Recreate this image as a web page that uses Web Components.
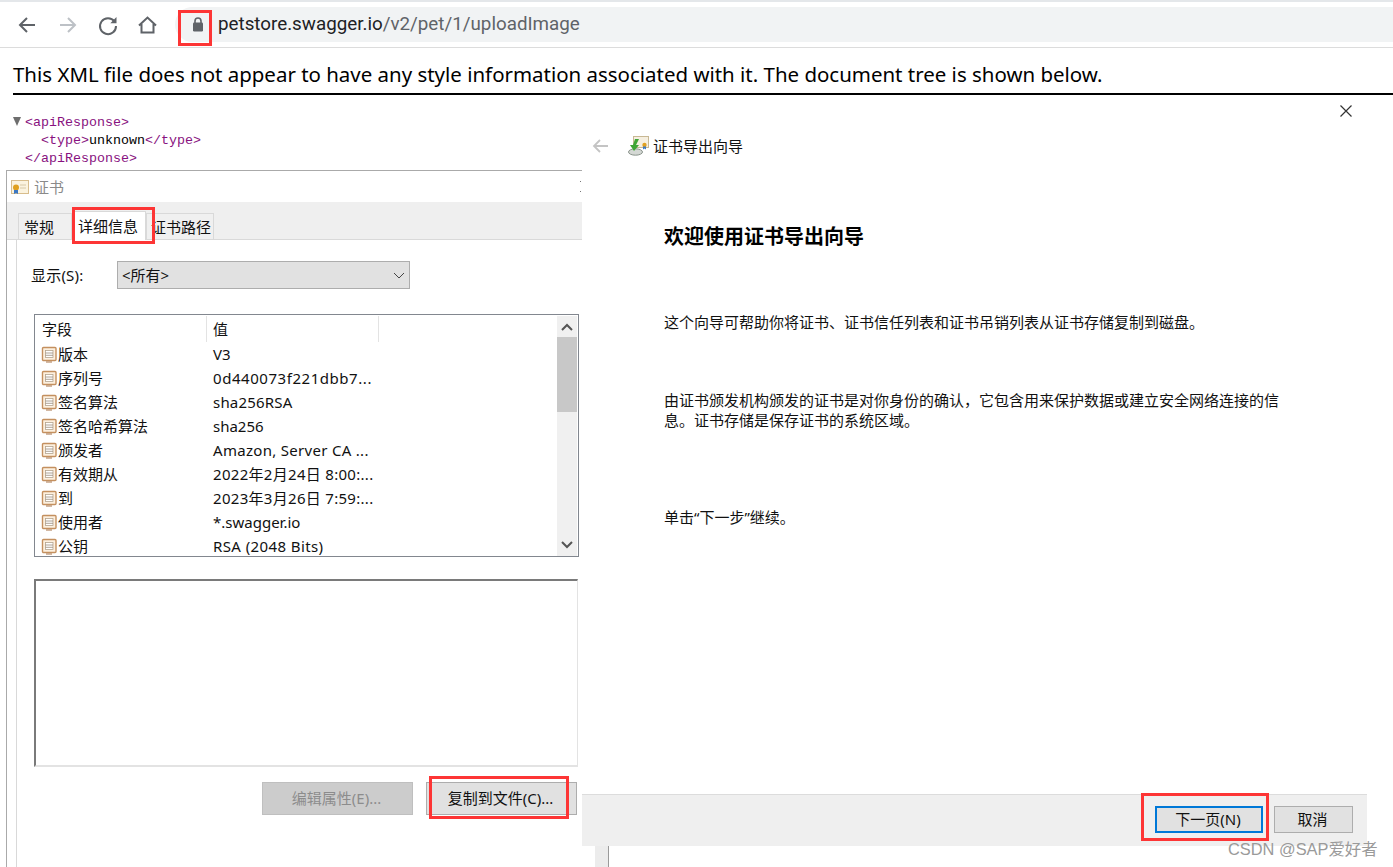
<!DOCTYPE html>
<html lang="zh">
<head>
<meta charset="utf-8">
<title>证书导出向导</title>
<style>
  html, body { margin: 0; height: 867px; overflow: hidden; background: #fff; }
  body { position: relative; font-family: "Noto Sans", "Noto Sans CJK SC", sans-serif; }
  cert-dialog { position: absolute; left: 6px; top: 170px; }
  export-wizard { position: absolute; left: 582px; top: 98px; }
  red-mark.lock { left: 178px; top: 10px; width: 28px; height: 30px; }
  red-mark.tab { left: 72px; top: 207px; width: 77px; height: 31px; }
  red-mark.copy { left: 429px; top: 776px; width: 134px; height: 37px; }
  red-mark.next { left: 1141px; top: 793px; width: 122px; height: 42px; }
  .watermark { position: absolute; left: 1228px; top: 838px; font: 16.4px/22px "Liberation Sans", "Noto Sans CJK SC", sans-serif; color: #9a9a9a; }
</style>
</head>
<body>
<browser-toolbar></browser-toolbar>
<xml-view></xml-view>
<cert-dialog></cert-dialog>
<export-wizard></export-wizard>
<red-mark class="lock"></red-mark>
<red-mark class="tab"></red-mark>
<red-mark class="copy"></red-mark>
<red-mark class="next"></red-mark>
<div class="watermark">CSDN @SAP爱好者</div>

<script>
const UI_FONT = `"Noto Sans", "Noto Sans CJK SC", sans-serif`;

class browserToolbar extends HTMLElement {
  constructor() {
    super();
    this.attachShadow({ mode: "open" });
  }

  connectedCallback() {
    this.shadowRoot.innerHTML = `
      <style>
        :host { display: block; height: 45px; border-top: 2px solid #e4e7ea; border-bottom: 1px solid #dcdcdc; }
        .bar { display: flex; align-items: center; height: 45px; padding-left: 15px; box-sizing: border-box; }
        .nav { display: flex; gap: 18px; width: 160px; flex: none; }
        svg { display: block; flex: none; overflow: visible; }
        .omni { flex: 1; height: 35px; display: flex; align-items: center; background: #f1f3f4; border-radius: 18px 0 0 18px; padding-left: 17px; }
        .url { margin-left: 14px; font: 18.8px/35px Roboto, sans-serif; color: #5f6368; white-space: nowrap; }
        .url b { font-weight: 400; color: #202124; }
      </style>
      <div class="bar">
        <div class="nav">
          <svg width="22" height="22" viewBox="0 0 22 22" fill="none" stroke="#5f6368" stroke-width="2"><path d="M20 11H5M12 4l-7 7 7 7"/></svg>
          <svg width="22" height="22" viewBox="0 0 22 22" fill="none" stroke="#bdc1c6" stroke-width="2"><path d="M5 11h15M13 4l7 7-7 7"/></svg>
          <svg width="22" height="22" viewBox="0 0 22 22" fill="none" stroke="#5f6368" stroke-width="2"><g transform="translate(2 0)"><path d="M17.500 7.500A8 8 0 1 0 19 12"/><path d="M19.500 3v6.200h-6.200z" fill="#5f6368" stroke="none"/></g></svg>
          <svg width="22" height="22" viewBox="0 0 22 22" fill="none" stroke="#5f6368" stroke-width="2"><path transform="translate(1.500 0)" d="M2.500 11.500 11 3.500l8.500 8M5 10v8.500h12V10"/></svg>
        </div>
        <div class="omni">
          <svg width="12" height="15" viewBox="0 0 12 15"><path d="M3 6V4a3 3 0 0 1 6 0v2" fill="none" stroke="#5f6368" stroke-width="1.600"/><rect x="1" y="5.500" width="10" height="9" rx="1.200" fill="#5f6368"/></svg>
          <span class="url"><b>petstore.swagger.io</b>/v2/pet/1/uploadImage</span>
        </div>
      </div>`;
  }
}

class xmlView extends HTMLElement {
  constructor() {
    super();
    this.attachShadow({ mode: "open" });
  }

  connectedCallback() {
    this.shadowRoot.innerHTML = `
      <style>
        :host { display: block; position: relative; }
        .notice { margin-left: 13px; height: 47px; box-sizing: border-box; padding-top: 13px; border-bottom: 2px solid #000; font: 20.47px/27px ${UI_FONT}; color: #000; white-space: nowrap; }
        .tree { padding: 19px 0 0 25px; font: 13.33px/18px "Liberation Mono", monospace; color: #881280; }
        .tree div { height: 18px; white-space: nowrap; }
        .tree .in { padding-left: 16px; }
        .tree i { font-style: normal; color: #000; }
        .arrow { position: absolute; left: 13px; top: 69px; width: 0; height: 0; border: 4px solid transparent; border-top: 9px solid #6e6e6e; border-bottom: 0; }
      </style>
      <div class="notice">This XML file does not appear to have any style information associated with it. The document tree is shown below.</div>
      <span class="arrow"></span>
      <div class="tree">
        <div>&lt;apiResponse&gt;</div>
        <div class="in"><span>&lt;type&gt;</span><i>unknown</i><span>&lt;/type&gt;</span></div>
        <div>&lt;/apiResponse&gt;</div>
      </div>`;
  }
}

class certRow extends HTMLElement {
  constructor() {
    super();
    this.attachShadow({ mode: "open" });
  }

  connectedCallback() {
    // track: the reference's hinted digits run a little wider on long values
    const track = this.getAttribute("track") || 0;
    this.shadowRoot.innerHTML = `
      <style>
        :host { display: grid; grid-template-columns: 172px 1fr; height: 24px; align-items: center; font: 15px/24px ${UI_FONT}; color: #111; white-space: nowrap; }
        .f { display: flex; align-items: center; padding-left: 6px; }
        .v { padding-left: 6px; letter-spacing: ${track}px; }
        svg { flex: none; margin-right: 1px; }
      </style>
      <div class="f">
        <svg width="16" height="17" viewBox="0 0 16 17">
          <rect x="1.500" y="1.500" width="13.500" height="13" rx="1" fill="#fdf0df" stroke="#c4905f" stroke-width="1.400"/>
          <rect x="4.500" y="4.500" width="7.500" height="7" fill="#fff" stroke="#b4a48e" stroke-width=".8"/>
          <path d="M4.500 7h7.500M4.500 9.300h7.500" stroke="#9a8c7a" stroke-width=".8"/>
          <path d="M5 16h6" stroke="#a8744a"/>
        </svg>
        <span>${this.getAttribute("field")}</span>
      </div>
      <div class="v">${this.getAttribute("value")}</div>`;
  }
}

class winButton extends HTMLElement {
  constructor() {
    super();
    this.attachShadow({ mode: "open" });
  }

  connectedCallback() {
    this.shadowRoot.innerHTML = `
      <style>
        :host { display: flex; align-items: center; justify-content: center; box-sizing: border-box; height: 33px; padding: 0 2px 2px 0; background: #e1e1e1; border: 1px solid #adadad; font: 15px/20px ${UI_FONT}; color: #111; white-space: nowrap; }
        :host([disabled]) { background: #cccccc; border-color: #bfbfbf; color: #8c8c8c; }
        :host([primary]) { border: 2px solid #0078d7; }
      </style>
      <slot></slot>`;
  }
}

class certDialog extends HTMLElement {
  constructor() {
    super();
    this.attachShadow({ mode: "open" });
  }

  getRows() {
    const rows = [
      ["版本", "V3"],
      ["序列号", "0d440073f221dbb7...", 0.55],
      ["签名算法", "sha256RSA", 0.2],
      ["签名哈希算法", "sha256"],
      ["颁发者", "Amazon, Server CA ...", 0.3],
      ["有效期从", "2022年2月24日 8:00:...", 0.3],
      ["到", "2023年3月26日 7:59:...", 0.3],
      ["使用者", "*.swagger.io"],
      ["公钥", "RSA (2048 Bits)", 0.4],
    ];
    return rows.map(([f, v, t]) => `<cert-row field="${f}" value="${v}" track="${t || 0}"></cert-row>`).join("");
  }

  connectedCallback() {
    this.shadowRoot.innerHTML = `
      <style>
        :host { display: block; width: 576px; height: 697px; box-sizing: border-box; border-top: 1px solid #aaa; border-left: 1px solid #aaa; background: #fff; font: 15px/20px ${UI_FONT}; color: #111; }
        .title { height: 31px; display: flex; align-items: center; gap: 5px; padding-left: 4px; color: #8a8a8a; }
        .title .cut { margin-left: auto; margin-right: 1px; }
        .tabband { height: 38px; box-sizing: border-box; background: #efefef; border-bottom: 1px solid #d9d9d9; display: flex; align-items: flex-end; padding-left: 11px; }
        .tab { height: 26px; box-sizing: border-box; border: 1px solid #d9d9d9; border-bottom: 0; background: #f0f0f0; display: flex; align-items: center; padding-left: 5px; white-space: nowrap; }
        .tab.a { width: 54px; }
        .tab.b { width: 74px; height: 29px; background: #fff; margin-bottom: -1px; }
        .tab.c { width: 68px; padding-left: 4px; }
        .pane { height: 627px; box-sizing: border-box; margin-left: 9px; border-left: 1px solid #d9d9d9; padding: 21px 0 0 14px; }
        .show { display: flex; align-items: center; height: 28px; }
        .show > span { width: 86px; letter-spacing: .2px; }
        .select { width: 293px; height: 28px; box-sizing: border-box; background: #e1e1e1; border: 1px solid #adadad; display: flex; align-items: center; justify-content: space-between; padding: 0 4px 0 4px; }
        .list { margin: 25px 0 0 3px; width: 545px; height: 243px; box-sizing: border-box; border: 1px solid #82878f; display: flex; padding-top: 1px; }
        .cols { flex: 1; overflow: hidden; }
        .head { display: grid; grid-template-columns: 172px 172px; height: 26px; align-items: center; }
        .head div { padding-left: 6px; border-right: 1px solid #e3e3e3; height: 26px; line-height: 26px; }
        .head div:first-child { padding-left: 7px; }
        .scroll { width: 20px; margin-right: 1px; background: #f0f0f0; display: flex; flex-direction: column; justify-content: space-between; position: relative; }
        .scroll .thumb { position: absolute; left: 0; right: 0; top: 21px; height: 75px; background: #c8c8c8; }
        .scroll svg { display: block; margin: 7px 3px; }
        .detail { margin: 22px 0 0 3px; width: 544px; height: 188px; box-sizing: border-box; border: 2px solid #e3e3e3; border-top: 2px solid #7a7a7a; border-left: 2px solid #7a7a7a; border-right-width: 1px; }
        .btns { display: flex; gap: 13px; margin: 15px 0 0 231px; }
        .btns win-button { width: 151px; }
      </style>
      <div class="title">
        <svg width="18" height="16" viewBox="0 0 18 16">
          <rect x="0.500" y="1.500" width="17" height="13" fill="#fbf3df" stroke="#d8bd8c"/>
          <path d="M9 6h6M9 9h6" stroke="#d8c9a8"/>
          <circle cx="5" cy="8.500" r="3" fill="#e0a020"/>
          <path d="M3 11v4l2-1 2 1v-4" fill="#3b78c4"/>
        </svg>
        <span>证书</span>
        <svg class="cut" width="1" height="12" viewBox="0 0 1 12"><path d="M0 0h1v1H0zM0 10h1v1H0z" fill="#777"/></svg>
      </div>
      <div class="tabband">
        <div class="tab a">常规</div>
        <div class="tab b">详细信息</div>
        <div class="tab c">证书路径</div>
      </div>
      <div class="pane">
        <div class="show">
          <span>显示(S):</span>
          <div class="select"><span>&lt;所有&gt;</span>
            <svg width="12" height="7" viewBox="0 0 12 7" fill="none" stroke="#444"><path d="M1 1l5 5 5-5"/></svg>
          </div>
        </div>
        <div class="list">
          <div class="cols">
            <div class="head"><div>字段</div><div>值</div></div>
            ${this.getRows()}
          </div>
          <div class="scroll">
            <div class="thumb"></div>
            <svg width="14" height="8" viewBox="0 0 14 8" fill="none" stroke="#555" stroke-width="2"><path d="M2 7l5-5 5 5"/></svg>
            <svg width="14" height="8" viewBox="0 0 14 8" fill="none" stroke="#555" stroke-width="2"><path d="M2 1l5 5 5-5"/></svg>
          </div>
        </div>
        <div class="detail"></div>
        <div class="btns">
          <win-button disabled>编辑属性(E)...</win-button>
          <win-button>复制到文件(C)...</win-button>
        </div>
      </div>`;
  }
}

class exportWizard extends HTMLElement {
  constructor() {
    super();
    this.attachShadow({ mode: "open" });
  }

  connectedCallback() {
    this.shadowRoot.innerHTML = `
      <style>
        :host { display: block; width: 811px; height: 769px; background: #fff; font: 15px/20px ${UI_FONT}; color: #111; position: relative; }
        .close { position: absolute; left: 757px; top: 6px; }
        .head { box-sizing: border-box; display: flex; align-items: center; height: 76px; padding: 20px 0 0 10px; }
        .head svg.back { margin-right: 19px; }
        .head svg.ico { margin-right: 4px; }
        .body { padding: 0 0 0 82px; height: 620px; box-sizing: border-box; }
        h1 { margin: 0; padding-top: 48px; font: 700 20px/30px ${UI_FONT}; color: #000; }
        p { margin: 0; width: 620px; }
        .p1 { margin-top: 60px; }
        .p2 { margin-top: 58px; }
        .p3 { margin-top: 77px; }
        .foot { width: 785px; height: 52px; box-sizing: border-box; background: #efefef; border-top: 1px solid #dcdcdc; display: flex; align-items: flex-start; justify-content: flex-end; gap: 11px; padding: 11px 14px 0 0; }
        .foot win-button { height: 27px; }
        .next { width: 108px; }
        .cancel { width: 79px; }
        .strip { width: 13px; height: 21px; margin-left: 13px; background: #ececec; border-right: 1px solid #9a9a9a; }
      </style>
      <svg class="close" width="14" height="14" viewBox="0 0 14 14" stroke="#333" stroke-width="1.200"><path d="M1.500 1.500l11 11M12.500 1.500l-11 11"/></svg>
      <div class="head">
        <svg class="back" width="17" height="14" viewBox="0 0 17 14" fill="none" stroke="#c4c4c4" stroke-width="1.800"><path d="M16 7H2M8 1L2 7l6 6"/></svg>
        <svg class="ico" width="21" height="20" viewBox="0 0 21 20">
          <rect x="5.500" y="0.500" width="15" height="11" fill="#f6efe0" stroke="#c8b894"/>
          <ellipse cx="7.500" cy="16" rx="7" ry="3.200" fill="#d4d8d4" stroke="#8b948c"/>
          <path d="M11 3l-3 6h3l-5 6-4-6h3l2-6z" fill="#3fa535"/>
          <circle cx="16.500" cy="9" r="2.200" fill="#e0a020"/>
          <path d="M15 10.500v3l1.500-1 1.500 1v-3" fill="#3b78c4"/>
        </svg>
        <span>证书导出向导</span>
      </div>
      <div class="body">
        <h1>欢迎使用证书导出向导</h1>
        <p class="p1">这个向导可帮助你将证书、证书信任列表和证书吊销列表从证书存储复制到磁盘。</p>
        <p class="p2">由证书颁发机构颁发的证书是对你身份的确认，它包含用来保护数据或建立安全网络连接的信息。证书存储是保存证书的系统区域。</p>
        <p class="p3">单击“下一步”继续。</p>
      </div>
      <div class="foot">
        <win-button class="next" primary>下一页(N)</win-button>
        <win-button class="cancel">取消</win-button>
      </div>
      <div class="strip"></div>`;
  }
}

class redMark extends HTMLElement {
  constructor() {
    super();
    this.attachShadow({ mode: "open" });
  }

  connectedCallback() {
    this.shadowRoot.innerHTML = `
      <style>
        :host { display: block; position: absolute; border: 3px solid #fd3535; pointer-events: none; }
      </style>`;
  }
}

customElements.define("win-button", winButton);
customElements.define("cert-row", certRow);
customElements.define("browser-toolbar", browserToolbar);
customElements.define("xml-view", xmlView);
customElements.define("cert-dialog", certDialog);
customElements.define("export-wizard", exportWizard);
customElements.define("red-mark", redMark);
</script>
</body>
</html>
